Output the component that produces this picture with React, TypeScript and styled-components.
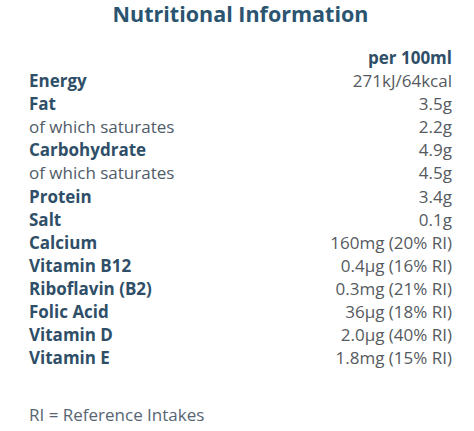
import React from "react";
import styled, { createGlobalStyle } from "styled-components";

const GlobalStyle = createGlobalStyle`
  body {
    margin: 0;
    background: #ffffff;
    font-family: "Open Sans", "Liberation Sans", sans-serif;
  }
`;

const Container = styled.div`
  width: 474px;
  box-sizing: border-box;
  padding: 0 22px 0 29px;
`;

const Title = styled.h2`
  margin: 0;
  font-size: 21.5px;
  line-height: 27px;
  font-weight: 700;
  text-align: center;
  color: #2a5470;
`;

const Table = styled.div`
  display: grid;
  grid-template-columns: 1fr auto;
  margin-top: 19px;
  font-size: 17px;
  line-height: 23.1px;
`;

const Label = styled.div<{ $bold?: boolean }>`
  font-weight: ${({ $bold }) => ($bold ? 700 : 400)};
  color: ${({ $bold }) => ($bold ? "#2f4f68" : "#505c68")};
`;

const Value = styled.div<{ $bold?: boolean }>`
  text-align: right;
  font-weight: ${({ $bold }) => ($bold ? 700 : 400)};
  color: ${({ $bold }) => ($bold ? "#2f4f68" : "#555a60")};
`;

const Note = styled.p`
  margin: 34px 0 0;
  font-size: 17px;
  line-height: 23px;
  color: #566573;
`;

type Row = { label: string; value: string; sub?: boolean };

const rows: Row[] = [
  { label: "Energy", value: "271kJ/64kcal" },
  { label: "Fat", value: "3.5g" },
  { label: "of which saturates", value: "2.2g", sub: true },
  { label: "Carbohydrate", value: "4.9g" },
  { label: "of which saturates", value: "4.5g", sub: true },
  { label: "Protein", value: "3.4g" },
  { label: "Salt", value: "0.1g" },
  { label: "Calcium", value: "160mg (20% RI)" },
  { label: "Vitamin B12", value: "0.4µg (16% RI)" },
  { label: "Riboflavin (B2)", value: "0.3mg (21% RI)" },
  { label: "Folic Acid", value: "36µg (18% RI)" },
  { label: "Vitamin D", value: "2.0µg (40% RI)" },
  { label: "Vitamin E", value: "1.8mg (15% RI)" },
];

const App: React.FC = () => {
  return (
    <Container>
      <GlobalStyle />
      <Title>Nutritional Information</Title>
      <Table>
        <Label />
        <Value $bold>per 100ml</Value>
        {rows.map((row, i) => (
          <React.Fragment key={i}>
            <Label $bold={!row.sub}>{row.label}</Label>
            <Value>{row.value}</Value>
          </React.Fragment>
        ))}
      </Table>
      <Note>RI = Reference Intakes</Note>
    </Container>
  );
};

export default App;
